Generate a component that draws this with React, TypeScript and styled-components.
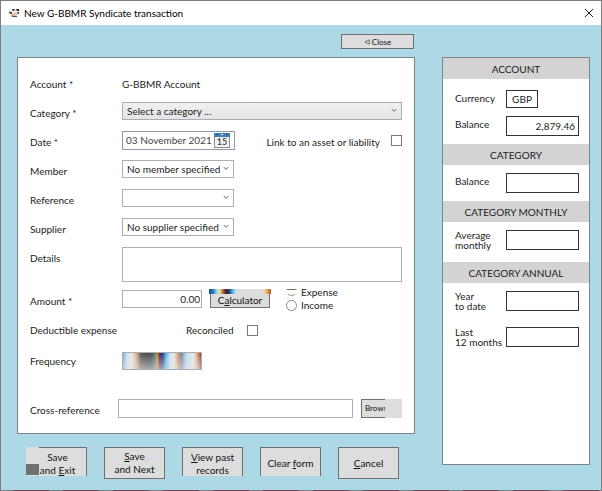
import React from 'react';
import styled, { createGlobalStyle, css } from 'styled-components';

const GlobalStyle = createGlobalStyle`
  *, *::before, *::after { box-sizing: border-box; }
  body { margin: 0; }
  body, button, input, select, textarea {
    font-family: Lato, "Open Sans", sans-serif;
    font-size: 10px;
    line-height: 13px;
    color: #1c1c1c;
  }
`;

const Window = styled.main`
  display: flex;
  flex-direction: column;
  min-height: 100vh;
  background: #add8e6;
  border: 1px solid #7c7e80;
  border-bottom: 0;
`;

const WindowEdge = styled.div`
  height: 1px;
  margin-top: auto;
  background: repeating-linear-gradient(90deg, #7c7e80 0 12px, #704a55 12px 48px, #7c7e80 48px 50px);
`;

const TitleBar = styled.header`
  display: flex;
  align-items: center;
  gap: 4px;
  height: 24px;
  padding: 0 7px;
  background: #fff;
`;

const Title = styled.h1`
  flex: 1;
  margin: 0;
  font-size: 10px;
  font-weight: 400;
  color: #000;
`;

const IconButton = styled.button`
  display: flex;
  padding: 0;
  border: 0;
  background: transparent;
`;

const CloseBar = styled.div`
  display: flex;
  padding: 9px 187px 8px 16px;
  justify-content: flex-end;
`;

const Button = styled.button`
  position: relative;
  padding: 0;
  border: 1px solid #707070;
  background: #ddd;
  color: #111;
`;

const CloseButton = styled(Button)`
  width: 73px;
  height: 15px;
  font-size: 8px;
  line-height: 12px;
`;

const Columns = styled.div`
  display: flex;
  gap: 27px;
  padding: 0 11px 11px 16px;
`;

const Left = styled.div`
  flex: 1;
  min-width: 0;
`;

const Form = styled.form`
  padding: 15px 12px;
  border: 1px solid #7e868a;
  background: #fff;
`;

const Row = styled.div<{ $gap?: number; $wide?: boolean }>`
  display: grid;
  grid-template-columns: ${p => (p.$wide ? 88 : 92)}px 1fr;
  align-items: start;
  min-height: 18px;
  margin-bottom: ${p => p.$gap ?? 11}px;
`;

const Label = styled.label<{ $high?: boolean }>`
  padding-top: ${p => (p.$high ? 3 : 5)}px;
  white-space: nowrap;
`;

const Caption = styled.div`
  padding-top: 5px;
  white-space: nowrap;
`;

const Cells = styled.div`
  display: flex;
  align-items: flex-start;
`;

const field = css`
  border: 1px solid #abadb3;
  border-radius: 0;
  background: #fff;
  outline: 0;
`;

const SelectBox = styled.div<{ $full?: boolean }>`
  position: relative;
  width: ${p => (p.$full ? '100%' : '112px')};
  height: 18px;
`;

const Select = styled.select<{ $shaded?: boolean }>`
  ${field}
  appearance: none;
  display: block;
  width: 100%;
  height: 18px;
  padding: 1px 12px 0 4px;
  ${p => p.$shaded && 'background: linear-gradient(#f0f0f0, #e5e5e5);'}
`;

const Chevron = styled.svg`
  position: absolute;
  right: 5px;
  top: 6px;
  pointer-events: none;
`;

const DateBox = styled.div`
  ${field}
  display: flex;
  align-items: center;
  width: 113px;
  height: 19px;
  padding: 0 4px 0 3px;
  border-color: #8e9bb0;
`;

const DateInput = styled.input`
  flex: 1;
  min-width: 0;
  padding: 0;
  border: 0;
  outline: 0;
  color: #444;
`;

const LinkLabel = styled(Label)`
  margin-left: auto;
  padding-right: 11px;
`;

const Check = styled.input`
  appearance: none;
  width: 11px;
  height: 11px;
  margin: 4px 0 0;
  border: 1px solid #777;
  background: #fff;
`;

const Details = styled.textarea`
  ${field}
  display: block;
  width: 100%;
  height: 35px;
  resize: none;
`;

const Amount = styled.input`
  ${field}
  width: 80px;
  height: 18px;
  padding: 0 1px;
  text-align: right;
`;

const Calculator = styled(Button)`
  width: 60px;
  height: 18px;
  margin-left: 8px;
  padding-top: 2px;
  &::before {
    content: '';
    position: absolute;
    inset: -2px -2px auto;
    height: 5px;
    background: linear-gradient(90deg, #16508e 0, #2874b5 4px, #a7d7ec 8px, #e8dfae 11px, #b86a24 14px, #431c30 17px, #193d7a 20px, #4aa4d8 23px, #c9e2ea 27px, #ddd 32px, #ddd 53px, #ead28f 56px, #b95b12 62px);
  }
`;

const Radios = styled.fieldset`
  display: flex;
  flex-direction: column;
  margin: -4px 0 0 16px;
  padding: 0;
  border: 0;
`;

const RadioLabel = styled.label`
  display: flex;
  align-items: center;
  gap: 4px;
  height: 13px;
`;

const Radio = styled.input<{ $cut?: boolean }>`
  appearance: none;
  width: 11px;
  height: 11px;
  margin: 0;
  border: 1px solid #8a8a8a;
  border-radius: 50%;
  ${p => p.$cut && css`
    height: 7px;
    border-color: #777 transparent #a2a2a2;
    border-radius: 0 0 6px 6px;
  `}
`;

const ReconciledLabel = styled(Label)`
  margin-left: 64px;
  width: 61px;
`;

const Frequency = styled.select`
  ${field}
  appearance: none;
  width: 80px;
  height: 18px;
  background:
    linear-gradient(transparent, #e4e4e4a0),
    linear-gradient(90deg, #74b2e3 0, #d8e6ed 6%, #ebe6df 12%, #d6a47d 18%, #555 23%, #454545 35%, #51707c 40%, #b9923b 44%, #701832 47%, #163f91 51%, #55b4e9 55%, #dbe8ee 61%, #eee5da 66%, #cf925e 71%, #6e84ad 75%, #bbddec 81%, #eaeaea 90%, #dfae81 95%, #873d21 100%);
`;

const CrossInput = styled.input`
  ${field}
  flex: 1;
  min-width: 0;
  height: 19px;
`;

const Browse = styled(Button)`
  width: 41px;
  height: 19px;
  margin-left: 8px;
  padding-left: 3px;
  border-right: 0;
  font-size: 8px;
  text-align: left;
  &::after {
    content: '';
    position: absolute;
    inset: -1px 0 -1px auto;
    width: 17px;
    background: #ddd;
  }
`;

const Footer = styled.div`
  display: flex;
  gap: 17px;
  padding: 13px 0 0 9px;
`;

const Action = styled(Button)<{ $cut?: boolean; $patched?: boolean }>`
  width: 61px;
  height: ${p => (p.$cut ? 29 : 32)}px;
  ${p => p.$cut && 'border-bottom: 0; padding-top: 3px;'}
  ${p => p.$patched && css`
    border-left: 0;
    padding-left: 3px;
    &::before {
      content: '';
      position: absolute;
      left: 0;
      top: -1px;
      width: 13px;
      height: 28px;
      background: linear-gradient(#ddd 17px, #707070 17px);
    }
  `}
`;

const ActionText = styled.span`
  position: relative;
  display: block;
`;

const Side = styled.aside`
  width: 148px;
  margin-bottom: 14px;
  border: 1px solid #7e868a;
  background: #fff;
`;

const SideTitle = styled.h2`
  height: 21px;
  margin: 0;
  background: #d3d3d3;
  font-size: 10px;
  font-weight: 400;
  line-height: 22px;
  text-align: center;
`;

const SideGroup = styled.div<{ $bottom?: number; $top?: number }>`
  display: flex;
  flex-direction: column;
  gap: ${p => (p.$top ? 8 : 16)}px;
  padding: ${p => p.$top ?? 8}px 10px ${p => p.$bottom ?? 8}px 12px;
`;

const SideRow = styled.div`
  display: grid;
  grid-template-columns: 51px 1fr;
  align-items: start;
`;

const SideLabel = styled.label<{ $single?: boolean }>`
  padding-top: ${p => (p.$single ? 3 : 0)}px;
  line-height: 10px;
  white-space: nowrap;
`;

const Value = styled.input<{ $small?: boolean }>`
  width: ${p => (p.$small ? '32px' : '100%')};
  height: ${p => (p.$small ? 18 : 20)}px;
  padding: 0 ${p => (p.$small ? 0 : 3)}px;
  border: 1px solid #333;
  outline: 0;
  background: #fff;
  text-align: ${p => (p.$small ? 'center' : 'right')};
`;

const Arrow = () => (
  <Chevron width="6" height="5" viewBox="0 0 6 5" fill="none" stroke="#666">
    <path d="M.7 1 3 3.4 5.3 1" />
  </Chevron>
);

const AppIcon = () => (
  <svg width="12" height="12" viewBox="0 0 12 12" aria-hidden="true">
    <path d="M0 6 2 4 4 5 3 7Z" fill="#999" />
    <path d="M3 2h5l3 1-1 5-4 1-3-2Z" fill="#e9e4e1" />
    <path d="M4 2h2l1 1-2 1ZM8 2h3v2H9Z" fill="#292524" />
    <path d="M2 5h2v2H2ZM9 5h2v2h-1Z" fill="#494543" />
    <path d="M4 7 8 6 10 8 7 9 4 9Z" fill="#e0b79d" />
    <path d="M3 8 5 9h4v1H4Z" fill="#5c4f49" />
  </svg>
);

const CalendarIcon = () => (
  <svg width="16" height="15" viewBox="0 0 16 15" aria-hidden="true">
    <rect x=".5" y=".5" width="15" height="14" fill="#f3f3f3" stroke="#8d8d8d" />
    <rect width="16" height="4" fill="#447eb5" />
    <path d="M2 1h2v1H2ZM12 1h2v1h-2Z" fill="#244f7c" />
    <path d="M7 1h2v1H7Z" fill="#fff" />
    <text x="8" y="12" textAnchor="middle" fontSize="9" fontWeight="700" fill="#555">15</text>
  </svg>
);

export default function App() {
  return (
    <>
      <GlobalStyle />
      <Window>
        <TitleBar>
          <AppIcon />
          <Title>New G-BBMR Syndicate transaction</Title>
          <IconButton aria-label="Close window">
            <svg width="10" height="10" viewBox="0 0 10 10" stroke="#222" fill="none">
              <path d="m1 1 8 8M9 1 1 9" />
            </svg>
          </IconButton>
        </TitleBar>
        <CloseBar>
          <CloseButton type="button">
            <svg width="6" height="6" viewBox="0 0 6 6" fill="none" stroke="#555" strokeWidth=".8" aria-hidden="true">
              <path d="M5.3.8v4.4L.8 3Z" />
            </svg>{' '}
            Close
          </CloseButton>
        </CloseBar>
        <Columns>
          <Left>
            <Form onSubmit={e => e.preventDefault()}>
              <Row>
                <Caption>Account *</Caption>
                <Caption>G-BBMR Account</Caption>
              </Row>
              <Row>
                <Label htmlFor="category">Category *</Label>
                <SelectBox $full>
                  <Select id="category" $shaded><option>Select a category ...</option></Select>
                  <Arrow />
                </SelectBox>
              </Row>
              <Row $gap={10}>
                <Label htmlFor="date">Date *</Label>
                <Cells>
                  <DateBox>
                    <DateInput id="date" defaultValue="03 November 2021" />
                    <IconButton type="button" aria-label="Choose date"><CalendarIcon /></IconButton>
                  </DateBox>
                  <LinkLabel htmlFor="link">Link to an asset or liability</LinkLabel>
                  <Check id="link" type="checkbox" />
                </Cells>
              </Row>
              <Row>
                <Label htmlFor="member">Member</Label>
                <SelectBox>
                  <Select id="member"><option>No member specified</option></Select>
                  <Arrow />
                </SelectBox>
              </Row>
              <Row>
                <Label htmlFor="reference">Reference</Label>
                <SelectBox>
                  <Select id="reference"><option /></Select>
                  <Arrow />
                </SelectBox>
              </Row>
              <Row>
                <Label htmlFor="supplier">Supplier</Label>
                <SelectBox>
                  <Select id="supplier"><option>No supplier specified</option></Select>
                  <Arrow />
                </SelectBox>
              </Row>
              <Row $gap={8}>
                <Label htmlFor="details">Details</Label>
                <Details id="details" />
              </Row>
              <Row $gap={9}>
                <Label htmlFor="amount">Amount *</Label>
                <Cells>
                  <Amount id="amount" defaultValue="0.00" />
                  <Calculator type="button">C<u>a</u>lculator</Calculator>
                  <Radios aria-label="Transaction type">
                    <RadioLabel><Radio $cut type="radio" name="kind" />Expense</RadioLabel>
                    <RadioLabel><Radio type="radio" name="kind" />Income</RadioLabel>
                  </Radios>
                </Cells>
              </Row>
              <Row $gap={13}>
                <Label as="div" $high>Deductible expense</Label>
                <Cells>
                  <ReconciledLabel $high htmlFor="reconciled">Reconciled</ReconciledLabel>
                  <Check id="reconciled" type="checkbox" />
                </Cells>
              </Row>
              <Row $gap={29}>
                <Label $high htmlFor="frequency">Frequency</Label>
                <Frequency id="frequency" />
              </Row>
              <Row $gap={0} $wide>
                <Label htmlFor="cross">Cross-reference</Label>
                <Cells>
                  <CrossInput id="cross" />
                  <Browse type="button">Brows</Browse>
                </Cells>
              </Row>
            </Form>
            <Footer>
              <Action $cut $patched><ActionText>Save</ActionText><ActionText>and <u>E</u>xit</ActionText></Action>
              <Action><ActionText><u>S</u>ave</ActionText><ActionText>and Next</ActionText></Action>
              <Action $cut><ActionText><u>V</u>iew past</ActionText><ActionText>records</ActionText></Action>
              <Action $cut>Clear <u>f</u>orm</Action>
              <Action><u>C</u>ancel</Action>
            </Footer>
          </Left>
          <Side>
            <SideTitle>ACCOUNT</SideTitle>
            <SideGroup $top={11}>
              <SideRow>
                <SideLabel $single htmlFor="currency">Currency</SideLabel>
                <Value $small id="currency" readOnly value="GBP" />
              </SideRow>
              <SideRow>
                <SideLabel $single htmlFor="balance">Balance</SideLabel>
                <Value id="balance" readOnly value="2,879.46" />
              </SideRow>
            </SideGroup>
            <SideTitle>CATEGORY</SideTitle>
            <SideGroup>
              <SideRow>
                <SideLabel $single htmlFor="cat-balance">Balance</SideLabel>
                <Value id="cat-balance" readOnly />
              </SideRow>
            </SideGroup>
            <SideTitle>CATEGORY MONTHLY</SideTitle>
            <SideGroup $bottom={12}>
              <SideRow>
                <SideLabel htmlFor="average">Average<br />monthly</SideLabel>
                <Value id="average" readOnly />
              </SideRow>
            </SideGroup>
            <SideTitle>CATEGORY ANNUAL</SideTitle>
            <SideGroup>
              <SideRow>
                <SideLabel htmlFor="year">Year<br />to date</SideLabel>
                <Value id="year" readOnly />
              </SideRow>
              <SideRow>
                <SideLabel htmlFor="last">Last<br />12 months</SideLabel>
                <Value id="last" readOnly />
              </SideRow>
            </SideGroup>
          </Side>
        </Columns>
        <WindowEdge />
      </Window>
    </>
  );
}
